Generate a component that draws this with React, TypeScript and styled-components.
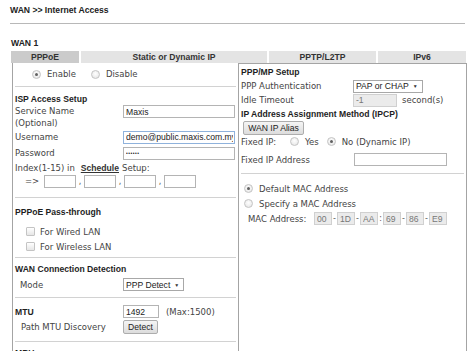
import React from 'react';
import styled, { createGlobalStyle } from 'styled-components';

const GlobalStyle = createGlobalStyle`
  html, body {
    margin: 0;
    padding: 0;
    background: #fff;
  }
  body {
    width: 474px;
    height: 351px;
    overflow: hidden;
    font-family: 'DejaVu Sans', Verdana, sans-serif;
    font-size: 8.5px;
    color: #444;
  }
`;

const ARIAL = `'Liberation Sans', Arial, sans-serif`;

const Page = styled.div`
  padding: 4px 0 0 10px;
`;

const PageTitle = styled.div`
  font: bold 8.6px/12px ${ARIAL};
  color: #222;
`;

const TitleRule = styled.div`
  margin-top: 7px;
  width: 455px;
  height: 1px;
  background: #b8b8b8;
`;

const WanName = styled.div`
  margin: 13px 0 0 1px;
  font: bold 8.6px/12px ${ARIAL};
  color: #222;
`;

const Tabs = styled.div`
  display: grid;
  grid-template-columns: 68px 186px 107px 88px;
  gap: 2px;
  margin: 2px 0 0 1px;
`;

const Tab = styled.div<{ $active?: boolean }>`
  height: 12px;
  line-height: 12px;
  text-align: center;
  font: bold 8.6px/12px ${ARIAL};
  color: #333;
  background: ${(p) => (p.$active ? '#cbcbcb' : '#e4e4e4')};
`;

const Panel = styled.div`
  display: grid;
  grid-template-columns: 226px 229px;
  margin-left: 2px;
`;

const LeftCol = styled.div`
  border-left: 1px solid #a4a4a4;
  padding-left: 2px;
  height: 300px;
`;

const RightCol = styled.div`
  border: 1px solid #a4a4a4;
  border-bottom: none;
  padding-left: 2px;
  height: 300px;
`;

const Row = styled.div<{ $h: number; $mt?: number; $pl?: number; $top?: boolean }>`
  display: flex;
  align-items: ${(p) => (p.$top ? 'flex-start' : 'center')};
  height: ${(p) => p.$h}px;
  margin-top: ${(p) => p.$mt ?? 0}px;
  padding-left: ${(p) => p.$pl ?? 0}px;
  white-space: nowrap;
`;

const Label = styled.span<{ $w: number }>`
  width: ${(p) => p.$w}px;
  flex-shrink: 0;
  line-height: 12px;
`;

const Heading = styled.span<{ $w?: number }>`
  font: bold 8.6px/12px ${ARIAL};
  color: #1e1e1e;
  ${(p) => (p.$w ? `width: ${p.$w}px; flex-shrink: 0;` : '')}
`;

const Divider = styled.div<{ $mt: number; $mr?: number }>`
  height: 1px;
  margin-top: ${(p) => p.$mt}px;
  margin-right: ${(p) => p.$mr ?? 2}px;
  background: #d2d2d2;
`;

const Radio = styled.span<{ $on?: boolean; $ml?: number }>`
  position: relative;
  width: 7px;
  height: 7px;
  flex-shrink: 0;
  margin-left: ${(p) => p.$ml ?? 0}px;
  margin-right: 6px;
  border: 1px solid #c4c4c4;
  border-radius: 50%;
  background: radial-gradient(circle at 50% 40%, #fff, #e2e2e2);
  &::after {
    content: '';
    display: ${(p) => (p.$on ? 'block' : 'none')};
    position: absolute;
    left: 2px;
    top: 2px;
    width: 3px;
    height: 3px;
    border-radius: 50%;
    background: #606060;
  }
`;

const Check = styled.span`
  width: 7px;
  height: 7px;
  flex-shrink: 0;
  margin-right: 5px;
  border: 1px solid #c4c4c4;
  border-radius: 1px;
  background: linear-gradient(#fff, #e6e6e6);
`;

const Field = styled.input<{ $w: number; $off?: boolean; $focus?: boolean; $dots?: boolean }>`
  box-sizing: border-box;
  width: ${(p) => p.$w}px;
  height: 13px;
  margin: 0;
  padding: 0 1px 0 2px;
  flex-shrink: 0;
  font: ${(p) => (p.$dots ? '5px' : '8.6px')} ${ARIAL};
  letter-spacing: ${(p) => (p.$dots ? '0.5px' : 'normal')};
  color: ${(p) => (p.$off ? '#777' : '#222')};
  background: ${(p) => (p.$off ? '#ebebeb' : '#fff')};
  border: 1px solid ${(p) => (p.$focus ? '#8fb2dc' : p.$off ? '#d0d0d0' : '#b4b4b4')};
  border-radius: 0;
  outline: none;
`;

const SelectBox = styled.div<{ $w: number }>`
  box-sizing: border-box;
  display: flex;
  align-items: center;
  gap: 4px;
  width: ${(p) => p.$w}px;
  height: 13px;
  padding-left: 2px;
  font: 8.6px ${ARIAL};
  color: #222;
  border: 1px solid #a8a8a8;
  background: #fff;
  span {
    font-size: 5px;
    color: #333;
  }
`;

const Button = styled.button<{ $w: number }>`
  box-sizing: border-box;
  width: ${(p) => p.$w}px;
  height: 14px;
  margin: 0;
  padding: 0;
  font: 8.6px ${ARIAL};
  color: #222;
  border: 1px solid #adadad;
  border-radius: 2px;
  background: linear-gradient(#f5f5f5, #dcdcdc);
`;

const Sep = styled.span<{ $w: number }>`
  width: ${(p) => p.$w}px;
  flex-shrink: 0;
  text-align: center;
  color: #555;
  font-size: 8px;
`;

const Link = styled.span`
  font: bold 8.6px ${ARIAL};
  text-decoration: underline;
  color: #333;
  margin: 0 3px 0 6px;
`;

const Hint = styled.span<{ $ml: number }>`
  margin-left: ${(p) => p.$ml}px;
`;

const macParts = ['00', '1D', 'AA', '69', '86', 'E9'];
const macSeps = ['-', '-', ':', '-', '-'];

export default function App() {
  return (
    <Page>
      <GlobalStyle />
      <PageTitle>WAN &gt;&gt; Internet Access</PageTitle>
      <TitleRule />
      <WanName>WAN 1</WanName>
      <Tabs>
        <Tab $active>PPPoE</Tab>
        <Tab>Static or Dynamic IP</Tab>
        <Tab>PPTP/L2TP</Tab>
        <Tab>IPv6</Tab>
      </Tabs>
      <Panel>
        <LeftCol>
          <Row $h={22} $pl={17}>
            <Radio $on />
            Enable
            <Radio $ml={15} />
            Disable
          </Row>
          <Divider $mt={1} />
          <Row $h={12} $mt={6}>
            <Heading>ISP Access Setup</Heading>
          </Row>
          <Row $h={24} $top>
            <Label $w={108}>
              Service Name
              <br />
              (Optional)
            </Label>
            <Field $w={112} readOnly value="Maxis" />
          </Row>
          <Row $h={16}>
            <Label $w={108}>Username</Label>
            <Field $w={112} $focus readOnly value="demo@public.maxis.com.my" />
          </Row>
          <Row $h={16}>
            <Label $w={108}>Password</Label>
            <Field $w={112} $dots type="password" readOnly value="123456" />
          </Row>
          <Row $h={13}>
            Index(1-15) in<Link>Schedule</Link>Setup:
          </Row>
          <Row $h={14} $pl={10}>
            <Label $w={19}>=&gt;</Label>
            <Field $w={32} readOnly value="" />
            <Sep $w={8}>,</Sep>
            <Field $w={32} readOnly value="" />
            <Sep $w={8}>,</Sep>
            <Field $w={32} readOnly value="" />
            <Sep $w={8}>,</Sep>
            <Field $w={32} readOnly value="" />
          </Row>
          <Divider $mt={9} />
          <Row $h={14} $mt={7}>
            <Heading>PPPoE Pass-through</Heading>
          </Row>
          <Row $h={15} $mt={5} $pl={11}>
            <Check />
            For Wired LAN
          </Row>
          <Row $h={15} $pl={11}>
            <Check />
            For Wireless LAN
          </Row>
          <Divider $mt={3} />
          <Row $h={14} $mt={4}>
            <Heading>WAN Connection Detection</Heading>
          </Row>
          <Row $h={15} $mt={1} $pl={5}>
            <Label $w={103}>Mode</Label>
            <SelectBox $w={61}>
              PPP Detect <span>▼</span>
            </SelectBox>
          </Row>
          <Divider $mt={5} />
          <Row $h={15} $mt={6}>
            <Heading $w={108}>MTU</Heading>
            <Field $w={36} readOnly value="1492" />
            <Hint $ml={7}>(Max:1500)</Hint>
          </Row>
          <Row $h={15} $pl={6}>
            <Label $w={102}>Path MTU Discovery</Label>
            <Button $w={35}>Detect</Button>
          </Row>
          <Divider $mt={7} />
          <Row $h={14} $mt={4}>
            <Heading>MRU</Heading>
          </Row>
        </LeftCol>
        <RightCol>
          <Row $h={15}>
            <Heading>PPP/MP Setup</Heading>
          </Row>
          <Row $h={14}>
            <Label $w={112}>PPP Authentication</Label>
            <SelectBox $w={70}>
              PAP or CHAP <span>▼</span>
            </SelectBox>
          </Row>
          <Row $h={14}>
            <Label $w={112}>Idle Timeout</Label>
            <Field $w={44} $off readOnly value="-1" />
            <Hint $ml={5}>second(s)</Hint>
          </Row>
          <Row $h={14}>
            <Heading>IP Address Assignment Method (IPCP)</Heading>
          </Row>
          <Row $h={14} $pl={2}>
            <Button $w={61}>WAN IP Alias</Button>
          </Row>
          <Row $h={13}>
            <Label $w={49}>Fixed IP:</Label>
            <Radio />
            Yes
            <Radio $ml={8} $on />
            No (Dynamic IP)
          </Row>
          <Row $h={15} $mt={4}>
            <Label $w={113}>Fixed IP Address</Label>
            <Field $w={93} readOnly value="" />
          </Row>
          <Divider $mt={6} $mr={2} />
          <Row $h={15} $mt={7} $pl={3}>
            <Radio $on />
            Default MAC Address
          </Row>
          <Row $h={15} $pl={3}>
            <Radio />
            Specify a MAC Address
          </Row>
          <Row $h={15} $pl={7}>
            <Label $w={66}>MAC Address:</Label>
            {macParts.map((part, i) => (
              <React.Fragment key={part}>
                <Field $w={18} $off readOnly value={part} />
                {i < macSeps.length && <Sep $w={5}>{macSeps[i]}</Sep>}
              </React.Fragment>
            ))}
          </Row>
        </RightCol>
      </Panel>
    </Page>
  );
}
